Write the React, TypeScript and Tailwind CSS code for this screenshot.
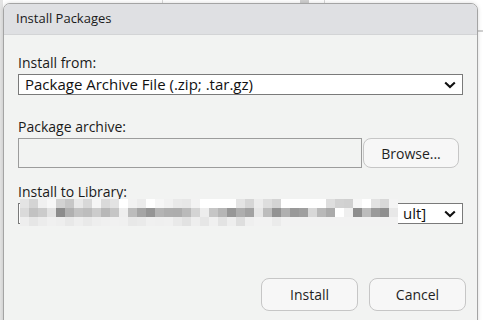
const mosaic = [
  // row 1
  ['#e4e4e4', '#d4d4d4', '#f0f0f0', '#f7f7f7', '#d2d2d2', '#c6c6c6', '#e8e8e8', '#d8d8d8', '#f5f5f5', '#dadada', '#e3e3e3', '#ffffff', '#f2f2f2', '#ececec', '#ffffff', '#f6f6f6', '#f1f1f1', '#e9e9e9', '#e7e7e7', '#f3f3f3', '#ffffff', '#ffffff', '#ffffff', '#ffffff', '#e4e4e4', '#d6d6d6', '#ececec', '#dedede', '#d4d4d4', '#ffffff', '#ffffff', '#ffffff', '#ffffff', '#ffffff', '#dedede', '#d2d2d2', '#d0d0d0', '#f6f6f6', '#ffffff', '#e2e2e2', '#d8d8d8', '#f4f4f4'],
  // row 2
  ['#dadada', '#c2c2c2', '#cbcbcb', '#e2e2e2', '#8c8c8c', '#b0b0b0', '#c2c2c2', '#bdbdbd', '#cccccc', '#b8b8b8', '#c6c6c6', '#eeeeee', '#bcbcbc', '#a5a5a5', '#959595', '#b4b4b4', '#aeaeae', '#adadad', '#bababa', '#d4d4d4', '#ededed', '#c6c6c6', '#b6b6b6', '#979797', '#aeaeae', '#a2a2a2', '#e6e6e6', '#bdbdbd', '#939393', '#b0b0b0', '#999999', '#9f9f9f', '#d8d8d8', '#b9b9b9', '#ababab', '#ffffff', '#efefef', '#8e8e8e', '#bcbcbc', '#9a9a9a', '#8f8f8f', '#e8e8e8'],
  // row 3
  ['#eeeeee', '#e6e6e6', '#ececec', '#f0f0f0', '#eeeeee', '#e8e8e8', '#eeeeee', '#e9e9e9', '#eeeeee', '#f0f0f0', '#f1f1f1', '#f0f0f0', '#e8e8e8', '#eaeaea', '#f0f0f0', '#efefef', '#f0f0f0', '#e9e9e9', '#e2e2e2', '#eeeeee', '#e6e6e6', '#f0f0f0', '#e3e3e3', '#eeeeee', '#dedede', '#efefef', '#f2f2f2', '#f2f2f2', '#ebebeb', '#f2f2f2', '#f2f2f2', '#f2f2f2', '#f2f2f2', '#f2f2f2', '#f2f2f2', '#f2f2f2', '#f2f2f2', '#f2f2f2', '#f2f2f2', '#f2f2f2', '#f2f2f2', '#f2f2f2'],
];

function Chevron() {
  return (
    <svg width="12" height="8" viewBox="0 0 12 8" className="shrink-0">
      <path d="M1.2 1.4 L6 6 L10.8 1.4" fill="none" stroke="#111" strokeWidth="2.1" />
    </svg>
  );
}

function Select({ children }: { children: React.ReactNode }) {
  return (
    <div className="flex h-[21px] items-center justify-between border border-[#7a7a7a] bg-white pl-[6px] pr-[6px]">
      <div className="whitespace-nowrap text-[15px] leading-none text-[#111]">{children}</div>
      <Chevron />
    </div>
  );
}

function Button({ label, className }: { label: string; className?: string }) {
  return (
    <div
      className={`flex items-center justify-center rounded-[8px] border border-[#c6c6c6] bg-[#f7f7f7] text-[14px] text-[#1f1f1f] ${className ?? ''}`}
    >
      {label}
    </div>
  );
}

export default function App() {
  return (
    <div className="relative h-[320px] w-[483px] overflow-hidden bg-white font-['Open_Sans',sans-serif]">
      {/* backdrop lines */}
      <div className="absolute left-[162px] top-0 h-[4px] w-px bg-[#d8d8d8]" />
      <div className="absolute left-[300px] top-0 h-[4px] w-[9px] bg-[#cfcfcf]" />
      <div className="absolute left-[324px] top-0 h-[4px] w-px bg-[#d8d8d8]" />
      <div className="absolute left-0 top-0 h-full w-[3px] bg-[#e4e4e4]" />
      <div className="absolute right-0 top-[30px] h-[2px] w-[5px] bg-[#d0d0d0]" />

      <div className="absolute left-[3px] top-[3px] h-[330px] w-[475px] overflow-hidden rounded-t-[7px] border border-[#a4a4a4] bg-[#f2f3f2] shadow-[0_0_4px_rgba(0,0,0,0.15)]">
        <div className="flex h-[31px] items-center border-b border-[#d3d4d6] bg-[#dfe0e3] pl-[12px] text-[13px] text-[#1a1a1a]">
          Install Packages
        </div>

        <div className="px-[14px] pt-[19px]">
          <div className="text-[14px] leading-[17px] text-[#1a1a1a]">Install from:</div>
          <div className="mt-[3px]">
            <Select>Package Archive File (.zip; .tar.gz)</Select>
          </div>

          <div className="mt-[23px] text-[14px] leading-[17px] text-[#1a1a1a]">Package archive:</div>
          <div className="mt-[3px] flex items-stretch">
            <div className="h-[30px] w-[344px] border border-[#9c9c9c] bg-[#f2f3f2]" />
            <Button label="Browse..." className="ml-px h-[30px] w-[96px]" />
          </div>

          <div className="mt-[15px] text-[14px] leading-[17px] text-[#1a1a1a]">Install to Library:</div>
          <div className="relative mt-[3px]">
            <Select>
              <span className="pl-[378px]">ult]</span>
            </Select>
            <div className="absolute left-[2px] top-[-4px] flex flex-col">
              {mosaic.map((row, r) => (
                <div key={r} className="flex">
                  {row.map((c, i) => (
                    <div key={i} className="h-[9px] w-[9px]" style={{ backgroundColor: c }} />
                  ))}
                </div>
              ))}
            </div>
          </div>
        </div>

        <div className="mt-[54px] flex justify-end gap-[11px] pr-[11px]">
          <Button label="Install" className="h-[33px] w-[97px]" />
          <Button label="Cancel" className="h-[33px] w-[97px]" />
        </div>
      </div>
    </div>
  );
}
